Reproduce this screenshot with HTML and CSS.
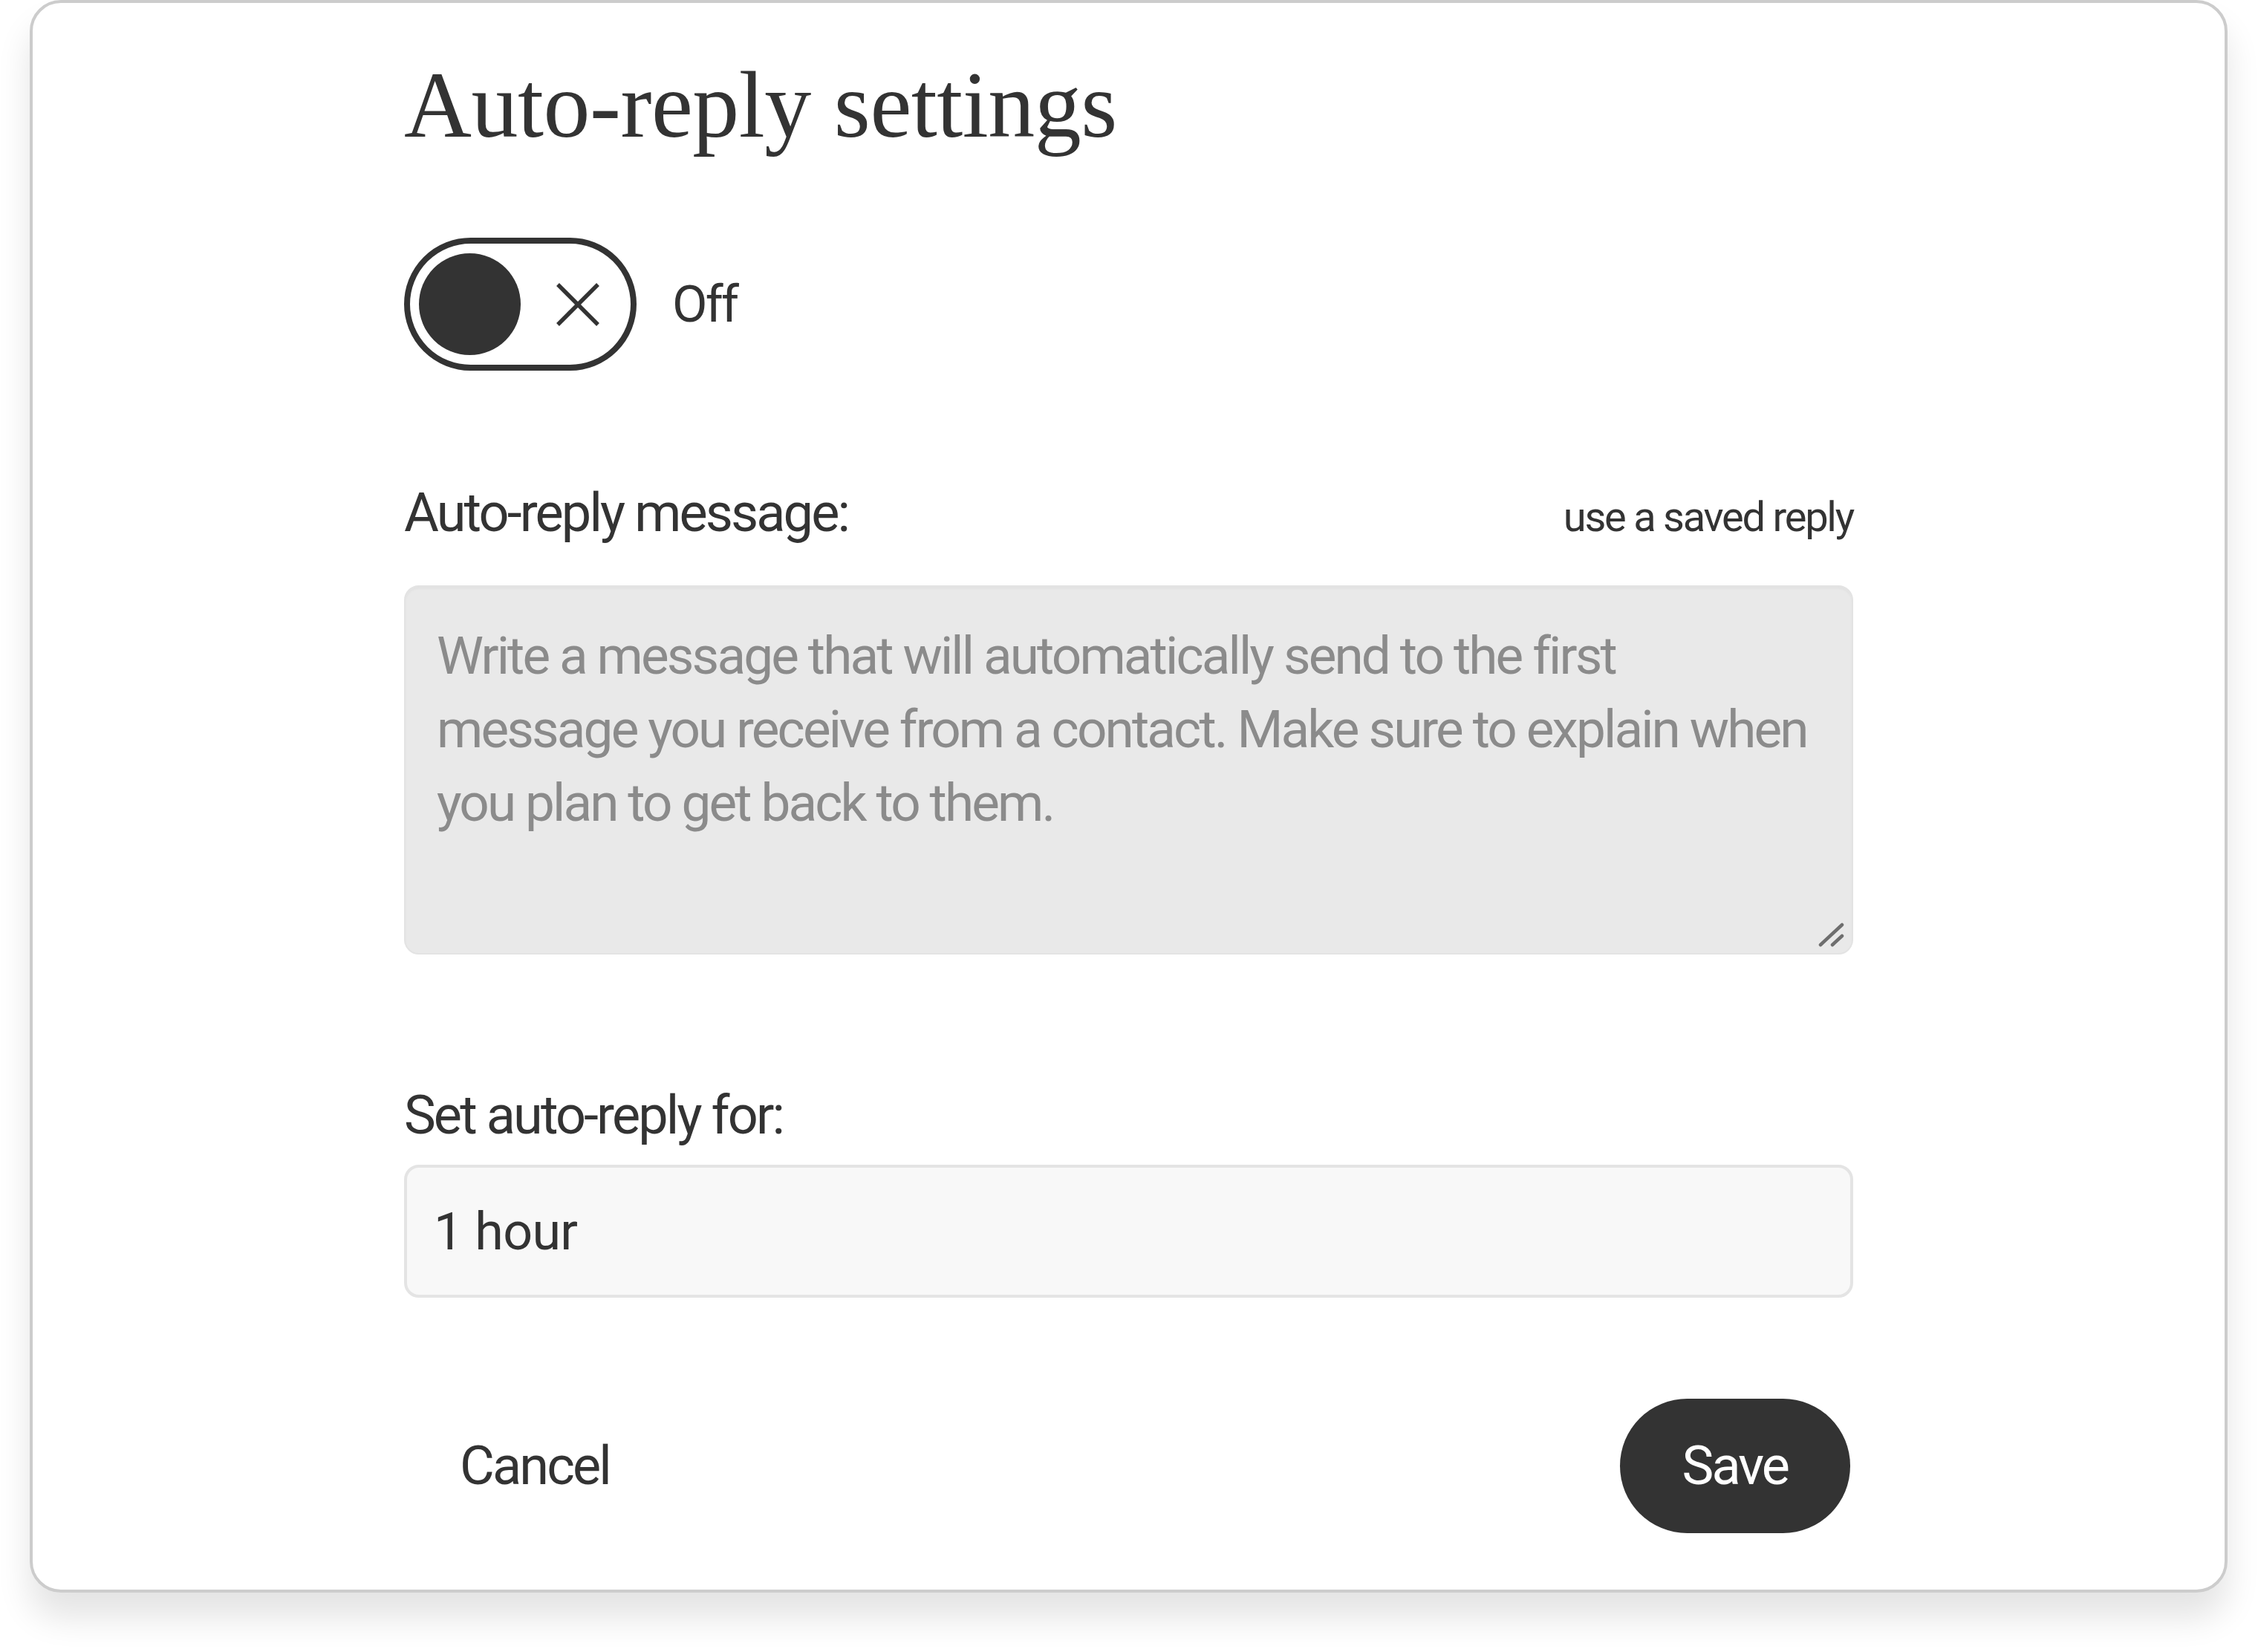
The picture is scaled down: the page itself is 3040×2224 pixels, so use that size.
FILE: index.html
```html
<!DOCTYPE html>
<html lang="en">
<head>
<meta charset="utf-8">
<title>Auto-reply settings</title>
<link rel="stylesheet" href="styles.css">
</head>
<body>
<div class="card">
  <div class="content">
    <h1 class="title">Auto-reply settings</h1>

    <div class="toggle-row">
      <div class="toggle" role="switch" aria-checked="false">
        <span class="knob"></span>
        <svg class="toggle-x" viewBox="0 0 60 60" width="60" height="60" aria-hidden="true">
          <path d="M3 3 L57 57 M57 3 L3 57" stroke="#333" stroke-width="5.5" fill="none"/>
        </svg>
      </div>
      <span class="toggle-label">Off</span>
    </div>

    <div class="field-head">
      <label class="field-label" for="msg">Auto-reply message:</label>
      <a class="saved-link" href="#">use a saved reply</a>
    </div>
    <div class="textarea-wrap">
      <textarea id="msg" class="message" placeholder="Write a message that will automatically send to the first&#10;message you receive from a contact. Make sure to explain when&#10;you plan to get back to them."></textarea>
      <svg class="grip" viewBox="0 0 40 40" width="40" height="40" aria-hidden="true">
        <path d="M8 37 L37 10 M24 37 L37 25" stroke="#6e6e6e" stroke-width="4.5" stroke-linecap="round" fill="none"/>
      </svg>
    </div>

    <label class="field-label label-second" for="dur">Set auto-reply for:</label>
    <div class="select-box" id="dur">1 hour</div>

    <div class="actions">
      <button class="btn btn-cancel" type="button">Cancel</button>
      <button class="btn btn-save" type="button">Save</button>
    </div>
  </div>
</div>
</body>
</html>
```

FILE: styles.css
```css
* {
  box-sizing: border-box;
}

html, body {
  margin: 0;
  padding: 0;
  background: #ffffff;
}

body {
  font-family: Roboto, "Liberation Sans", Arial, sans-serif;
  color: #333333;
  height: 2224px;
  overflow: hidden;
}

.card {
  margin: 0 41px 0 40px;
  border: 4px solid #cccccc;
  border-radius: 42px;
  background: #ffffff;
  box-shadow: 0 34px 46px rgba(0, 0, 0, 0.11);
  padding: 62px 0 76px;
}

.content {
  width: 1951px;
  margin: 0 auto;
  display: flex;
  flex-direction: column;
}

.title {
  margin: 0;
  font-family: "Liberation Serif", "Times New Roman", serif;
  font-weight: 400;
  font-size: 126px;
  line-height: 151px;
  letter-spacing: -0.5px;
  color: #333333;
  padding-left: 0;
}

.toggle-row {
  margin-top: 103px;
  display: flex;
  align-items: center;
  height: 179px;
}

.toggle {
  width: 313px;
  height: 179px;
  border: 8px solid #333333;
  border-radius: 90px;
  padding: 0 12px;
  display: flex;
  align-items: center;
}

.knob {
  width: 137px;
  height: 137px;
  border-radius: 50%;
  background: #333333;
  flex: none;
}

.toggle-x {
  margin-left: 47px;
  flex: none;
}

.toggle-label {
  margin-left: 48px;
  font-size: 69px;
  letter-spacing: -0.04em;
  line-height: 1;
  color: #333333;
}

.field-head {
  margin-top: 149px;
  display: flex;
  justify-content: space-between;
  align-items: baseline;
}

.field-label {
  font-size: 72px;
  line-height: 86px;
  letter-spacing: -0.04em;
  color: #333333;
}

.saved-link {
  font-size: 56px;
  letter-spacing: -0.04em;
  color: #333333;
  text-decoration: none;
}

.textarea-wrap {
  position: relative;
  margin-top: 54px;
  height: 497px;
}

.message {
  display: block;
  width: 100%;
  height: 100%;
  resize: none;
  border: 2px solid #e3e3e3;
  border-radius: 20px;
  background: #e9e9e9;
  box-shadow: inset 0 3px 3px rgba(0, 0, 0, 0.03);
  padding: 43px 20px 20px 42px;
  font-family: Roboto, "Liberation Sans", Arial, sans-serif;
  font-size: 71px;
  line-height: 99px;
  letter-spacing: -0.04em;
  color: #333333;
  outline: none;
  overflow: hidden;
}

.message::placeholder {
  color: #8b8b8b;
  opacity: 1;
}

.grip {
  position: absolute;
  right: 12px;
  bottom: 10px;
}

.label-second {
  margin-top: 174px;
  display: block;
}

.select-box {
  margin-top: 23px;
  height: 179px;
  border: 4px solid #e4e4e4;
  border-radius: 20px;
  background: #f8f8f8;
  padding: 0 36px;
  display: flex;
  align-items: center;
  font-size: 70px;
  letter-spacing: -0.01em;
  color: #333333;
}

.actions {
  margin-top: 136px;
  display: flex;
  justify-content: space-between;
  align-items: center;
}

.btn {
  height: 181px;
  border: none;
  border-radius: 91px;
  font-family: Roboto, "Liberation Sans", Arial, sans-serif;
  font-size: 72px;
  letter-spacing: -0.04em;
  cursor: pointer;
}

.btn-cancel {
  background: transparent;
  color: #333333;
  padding: 0 75px;
}

.btn-save {
  background: #333333;
  color: #ffffff;
  padding: 0 84px;
  margin-right: 4px;
}
```
